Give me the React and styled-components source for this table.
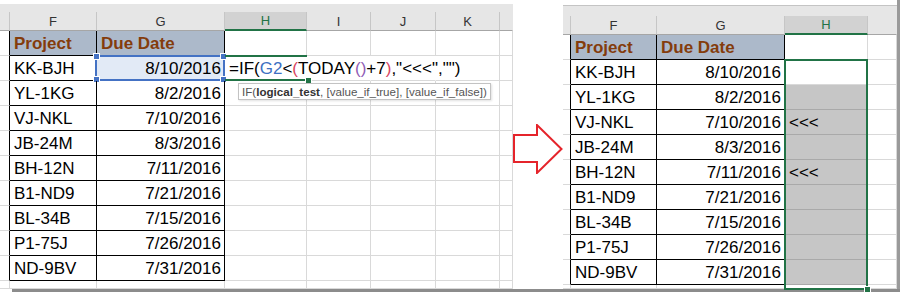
import { Fragment } from "react";
import styled, { createGlobalStyle } from "styled-components";

const GREEN = "#217346";
const GRID = "#d9d9d9";
const INK = "#000";

const projects = [
  ["KK-BJH", "8/10/2016"],
  ["YL-1KG", "8/2/2016"],
  ["VJ-NKL", "7/10/2016"],
  ["JB-24M", "8/3/2016"],
  ["BH-12N", "7/11/2016"],
  ["B1-ND9", "7/21/2016"],
  ["BL-34B", "7/15/2016"],
  ["P1-75J", "7/26/2016"],
  ["ND-9BV", "7/31/2016"],
];

// rows that fall within the next week
const flagged = ["VJ-NKL", "BH-12N"];

const GlobalStyle = createGlobalStyle`
  body {
    margin: 0;
    background: #fff;
    font-family: "Liberation Sans", Arial, sans-serif;
  }
`;

const Page = styled.div`
  width: 900px;
  height: 292px;
  display: flex;
  flex-direction: column;
  overflow: hidden;
`;

const Stage = styled.div`
  display: flex;
  align-items: flex-start;
  height: 289px;
`;

const BottomEdge = styled.div`
  height: 3px;
  margin-left: 12px;
  background: #8c8c8c;
`;

const Sheet = styled.div`
  display: flex;
  flex-direction: column;
  padding-top: ${(p) => p.$top}px;
  border-right: ${(p) => (p.$edge ? "3px solid #9a9a9a" : "none")};
`;

const TopStrip = styled.div`
  height: ${(p) => p.$h}px;
  background: #e6e6e6;
  border-top: ${(p) => (p.$line ? "1px solid #c4c4c4" : "none")};
  box-sizing: border-box;
`;

const Grid = styled.div`
  display: grid;
  grid-template-columns: ${(p) => p.$cols};
  grid-template-rows: ${(p) => p.$rows};
`;

const ColHead = styled.div`
  box-sizing: border-box;
  display: flex;
  align-items: center;
  justify-content: center;
  font-size: 13px;
  color: ${(p) => (p.$active ? GREEN : "#333")};
  background: ${(p) => (p.$active ? "#d2d2d2" : "#e6e6e6")};
  border-right: 1px solid ${(p) => (p.$last ? "#e6e6e6" : "#c6c6c6")};
  border-bottom: ${(p) => (p.$active ? `2px solid ${GREEN}` : "1px solid #a6a6a6")};
`;

const Cell = styled.div`
  position: relative;
  box-sizing: border-box;
  display: flex;
  align-items: center;
  justify-content: ${(p) => (p.$right ? "flex-end" : "flex-start")};
  padding: 2px 3px 0 4px;
  font-size: 17px;
  font-weight: ${(p) => (p.$bold ? 700 : 400)};
  color: ${(p) => (p.$bold ? "#843c0c" : "#000")};
  white-space: nowrap;
  background: ${(p) => p.$bg || "transparent"};
  border-right: 1px solid ${(p) => p.$lineR || GRID};
  border-bottom: 1px solid ${(p) => p.$lineB || GRID};
  z-index: ${(p) => (p.$raise ? 2 : "auto")};
`;

const RefBox = styled.div`
  position: absolute;
  inset: -1px -1px -1px -2px;
  border: 2px solid #4472c4;
  background: #e2eaf6;
`;

const Grip = styled.span`
  position: absolute;
  width: 5px;
  height: 5px;
  background: ${(p) => p.$color};
  border: 1px solid #fff;
  ${(p) => (p.$y === "top" ? "top: -4px;" : "bottom: -4px;")}
  ${(p) => (p.$x === "left" ? "left: -4px;" : "right: -4px;")}
`;

const EditBars = styled.div`
  position: absolute;
  inset: -1px -1px -1px 0;
  border-top: 2px solid ${GREEN};
  border-bottom: 2px solid ${GREEN};
`;

const Value = styled.span`
  position: relative;
  z-index: 1;
`;

const Tok = styled.span`
  color: ${(p) => p.$c};
`;

const Tip = styled.div`
  position: absolute;
  left: 13px;
  top: calc(100% + 3px);
  height: 17px;
  padding: 0 3px;
  display: flex;
  align-items: center;
  box-sizing: border-box;
  background: #fff;
  border: 1px solid #c3c3c3;
  box-shadow: 1px 1px 2px rgba(0, 0, 0, 0.12);
  font-size: 11.6px;
  color: #555;
  z-index: 3;

  b {
    color: #333;
  }
`;

const Selection = styled.div`
  position: absolute;
  top: -1px;
  left: -1px;
  right: -1px;
  height: 227px;
  border: 2px solid ${GREEN};
  z-index: 2;
  pointer-events: none;
`;

const Handle = styled.span`
  position: absolute;
  right: -5px;
  bottom: -5px;
  width: 5px;
  height: 5px;
  background: ${GREEN};
  border: 1px solid #fff;
`;

const ArrowSlot = styled.div`
  width: 50px;
  height: 289px;
  display: flex;
  align-items: center;
  padding-top: 9px;
  box-sizing: border-box;
`;

const Arrow = () => (
  <svg width="50" height="50" viewBox="0 0 50 50">
    <polygon
      points="1,11 24,11 24,1 48.5,25 24,49 24,38 1,38"
      fill="#fff"
      stroke="#e5242b"
      strokeWidth="2"
    />
  </svg>
);

const FormulaText = () => (
  <Value>
    =IF(<Tok $c="#3d6fc2">G2</Tok>&lt;<Tok $c="#d8435e">(</Tok>TODAY
    <Tok $c="#8e5bb5">()</Tok>+7<Tok $c="#d8435e">)</Tok>,"&lt;&lt;&lt;","")
  </Value>
);

const Row = ({ name, date, first }) => (
  <>
    <Cell $lineR={INK} />
    <Cell $lineR={INK} $lineB={INK}>
      {name}
    </Cell>
    <Cell $right $lineR={INK} $lineB={INK}>
      {first && (
        <RefBox>
          <Grip $color="#4472c4" $y="top" $x="left" />
          <Grip $color="#4472c4" $y="top" $x="right" />
          <Grip $color="#4472c4" $y="bottom" $x="left" />
          <Grip $color="#4472c4" $y="bottom" $x="right" />
        </RefBox>
      )}
      <Value>{date}</Value>
    </Cell>
    {first ? (
      <>
        <Cell $raise $lineR="transparent">
          <EditBars>
            <Handle />
          </EditBars>
          <FormulaText />
          <Tip>
            IF(<b>logical_test</b>, [value_if_true], [value_if_false])
          </Tip>
        </Cell>
        <Cell $lineR="transparent" />
        <Cell $lineR="transparent" />
      </>
    ) : (
      <>
        <Cell />
        <Cell />
        <Cell />
      </>
    )}
    <Cell />
    <Cell />
  </>
);

const LeftSheet = () => {
  const letters = ["F", "G", "H", "I", "J", "K"];
  return (
    <Sheet $top={4}>
      <TopStrip $h={8} />
      <Grid
        $cols="10px 87px 128px 82px 64px 65px 64px 13px"
        $rows="19px repeat(10, 25px) 8px"
      >
        <ColHead />
        {letters.map((l) => (
          <ColHead key={l} $active={l === "H"}>
            {l}
          </ColHead>
        ))}
        <ColHead $last />

        <Cell $lineR={INK} />
        <Cell $bg="#acb9ca" $bold $lineR={INK} $lineB={INK}>
          Project
        </Cell>
        <Cell $bg="#acb9ca" $bold $lineR={INK} $lineB={INK}>
          Due Date
        </Cell>
        {[0, 1, 2, 3, 4].map((i) => (
          <Cell key={i} />
        ))}

        {projects.map(([name, date], r) => (
          <Row key={name} name={name} date={date} first={r === 0} />
        ))}

        {Array.from({ length: 8 }).map((_, i) => (
          <Cell key={i} />
        ))}
      </Grid>
    </Sheet>
  );
};

const RightSheet = () => (
  <Sheet $top={5} $edge>
    <TopStrip $h={11} $line />
    <Grid $cols="8px 86px 128px 83px 29px" $rows="19px repeat(10, 25px) 4px">
      <ColHead />
      <ColHead>F</ColHead>
      <ColHead>G</ColHead>
      <ColHead $active>H</ColHead>
      <ColHead $last />

      <Cell $lineR={INK} />
      <Cell $bg="#acb9ca" $bold $lineR={INK} $lineB={INK}>
        Project
      </Cell>
      <Cell $bg="#acb9ca" $bold $lineR={INK} $lineB={INK}>
        Due Date
      </Cell>
      <Cell />
      <Cell />

      {projects.map(([name, date], r) => (
        <Fragment key={name}>
          <Cell $lineR={INK} />
          <Cell $lineR={INK} $lineB={INK}>
            {name}
          </Cell>
          <Cell $right $lineR={INK} $lineB={INK}>
            {date}
          </Cell>
          <Cell
            $bg={r === 0 ? "#fff" : "#c6c6c6"}
            $lineB={r === 0 ? GRID : "#a9a9a9"}
          >
            {r === 0 && (
              <Selection>
                <Handle />
              </Selection>
            )}
            {flagged.includes(name) ? "<<<" : ""}
          </Cell>
          <Cell />
        </Fragment>
      ))}

      {[0, 1, 2, 3, 4].map((i) => (
        <Cell key={i} />
      ))}
    </Grid>
  </Sheet>
);

export default function App() {
  return (
    <>
      <GlobalStyle />
      <Page>
        <Stage>
          <LeftSheet />
          <ArrowSlot>
            <Arrow />
          </ArrowSlot>
          <RightSheet />
        </Stage>
        <BottomEdge />
      </Page>
    </>
  );
}
